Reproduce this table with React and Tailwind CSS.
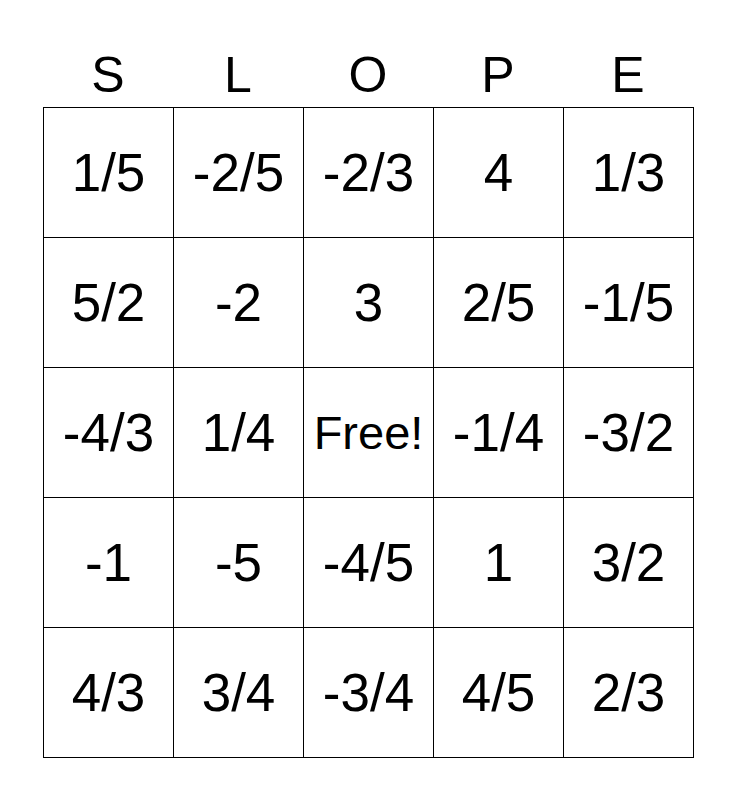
import React from "react";

const letters = ["S", "L", "O", "P", "E"];
const cells = [
  ["1/5", "-2/5", "-2/3", "4", "1/3"],
  ["5/2", "-2", "3", "2/5", "-1/5"],
  ["-4/3", "1/4", "Free!", "-1/4", "-3/2"],
  ["-1", "-5", "-4/5", "1", "3/2"],
  ["4/3", "3/4", "-3/4", "4/5", "2/3"],
];

export default function App() {
  return (
    <div className="w-[736px] h-[800px] bg-white" style={{ fontFamily: '"Liberation Sans", Arial, sans-serif' }}>
      <div className="pl-[43px] pt-[43px]">
        <div className="grid grid-cols-[repeat(5,130px)] h-[64px] w-[651px]">
          {letters.map((l) => (
            <div key={l} className="flex items-center justify-center text-[50px] leading-none text-black">
              {l}
            </div>
          ))}
        </div>
        <div className="grid grid-cols-[repeat(5,129px)] gap-px bg-black p-px w-[651px]">
          {cells.flat().map((c, i) => (
            <div
              key={i}
              className={`bg-white h-[129px] flex items-center justify-center text-black leading-none ${c === "Free!" ? "text-[47px]" : "text-[53px]"}`}
            >
              {c}
            </div>
          ))}
        </div>
      </div>
    </div>
  );
}
